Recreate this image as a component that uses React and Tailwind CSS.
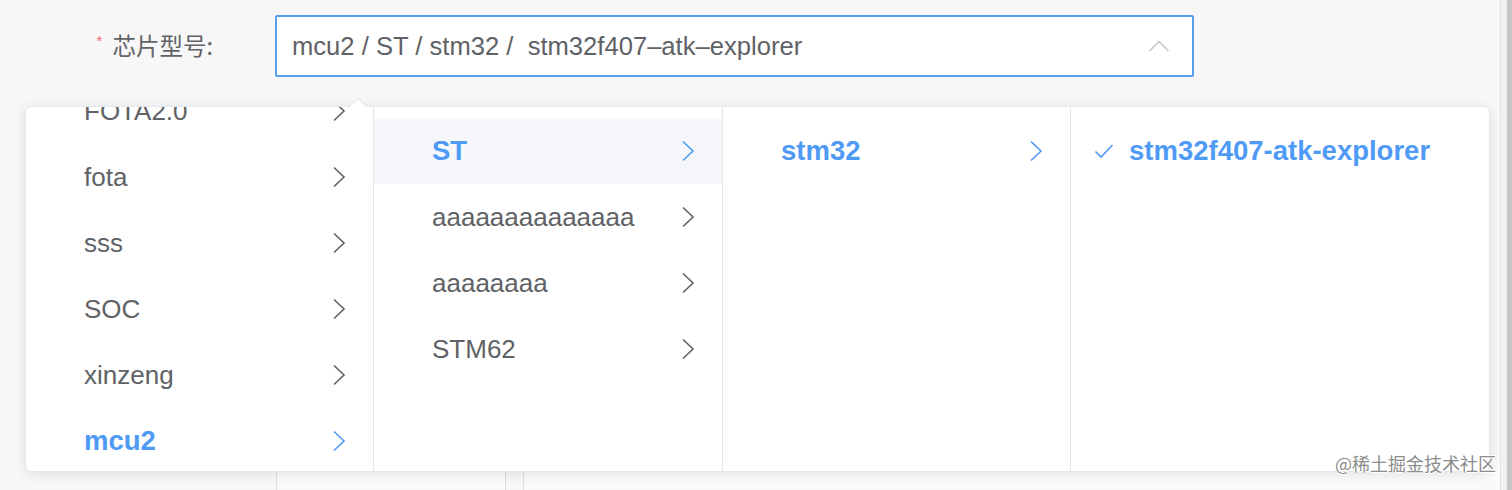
import React from "react";

const FONT = { fontFamily: '"Liberation Sans", Arial, "Noto Sans CJK SC", sans-serif' };

function ChevronRight({ active }) {
  return (
    <svg width="14" height="22" viewBox="0 0 14 22" fill="none" className="shrink-0">
      <path d="M2 1.5 L12 11 L2 20.5" stroke={active ? "#4f9af5" : "#606266"} strokeWidth="1.6" strokeLinejoin="miter" />
    </svg>
  );
}

function Item({ label, active, highlight, arrow = true, check }) {
  return (
    <div
      className={`h-[66px] flex items-center pr-[27px] ${check ? "pl-[23px]" : "pl-[58px]"} ${highlight ? "bg-[#f5f7fa]" : ""}`}
    >
      {check && (
        <svg width="20" height="16" viewBox="0 0 20 16" fill="none" className="mr-[15px] shrink-0">
          <path d="M1.5 8.5 L7 14 L18.5 2" stroke="#4f9af5" strokeWidth="1.6" />
        </svg>
      )}
      <span
        className={`flex-1 leading-none ${active ? "text-[27.5px] font-bold text-[#4f9af5]" : "text-[26px] text-[#606266]"}`}
      >
        {label}
      </span>
      {arrow && <ChevronRight active={active} />}
    </div>
  );
}

export default function App() {
  return (
    <div className="flex w-[1512px] h-[490px] overflow-hidden bg-[#f7f7f7]" style={FONT}>
      <div className="relative flex-1 flex flex-col">
        {/* form row */}
        <div className="flex items-center h-[62px] mt-[15px]">
          <div className="w-[275px] flex items-center justify-end pr-[62px] h-full">
            <span className="text-[#f56c6c] text-[15px] mr-[10px] mb-[10px]">*</span>
            <span className="text-[23.5px] text-[#606266]" style={{ fontFamily: '"Noto Sans CJK SC", "Liberation Sans", sans-serif' }}>
              芯片型号:
            </span>
          </div>
          <div className="w-[919px] h-[62px] border-2 border-[#5a9cef] bg-white rounded-[2px] flex items-center pl-[15px] pr-[22px]">
            <span className="flex-1 text-[25.6px] text-[#606266] whitespace-pre">mcu2 / ST / stm32 /  stm32f407–atk–explorer</span>
            <svg width="22" height="14" viewBox="0 0 22 14" fill="none">
              <path d="M1.5 12 L11 2.5 L20.5 12" stroke="#c0c4cc" strokeWidth="1.5" />
            </svg>
          </div>
        </div>

        {/* background form row (mostly hidden) */}
        <div className="flex mt-auto h-[30px]">
          <div className="w-[276px]" />
          <div className="w-[230px] border-l border-r border-[#dcdfe6] bg-[#fafafa]" />
          <div className="w-[17px]" />
          <div className="flex-1 border-l border-[#dcdfe6] bg-[#fafafa]" />
        </div>

        {/* popper arrow */}
        <div className="absolute left-[352px] top-[100px] w-[12px] h-[12px] bg-white rotate-45 border-l border-t border-[#e4e7ed] z-20" />

        {/* dropdown */}
        <div className="absolute left-[25px] top-[106px] w-[1465px] h-[366px] bg-white border border-[#e4e7ed] rounded-[6px] shadow-[0_2px_12px_rgba(0,0,0,0.1)] flex overflow-hidden z-10">
          <div className="w-[348px] border-r border-[#e4e7ed] overflow-hidden">
            <div className="mt-[-29px]">
              <Item label="FOTA2.0" />
              <Item label="fota" />
              <Item label="sss" />
              <Item label="SOC" />
              <Item label="xinzeng" />
              <Item label="mcu2" active />
            </div>
          </div>
          <div className="w-[349px] border-r border-[#e4e7ed] pt-[11px]">
            <Item label="ST" active highlight />
            <Item label="aaaaaaaaaaaaaa" />
            <Item label="aaaaaaaa" />
            <Item label="STM62" />
          </div>
          <div className="w-[348px] border-r border-[#e4e7ed] pt-[11px]">
            <Item label="stm32" active />
          </div>
          <div className="flex-1 pt-[11px]">
            <Item label="stm32f407-atk-explorer" active check arrow={false} />
          </div>
        </div>

        {/* watermark */}
        <div
          className="absolute left-[1335px] top-[450px] z-30 text-[18px] text-[#8c8c8c] whitespace-nowrap"
          style={{
            fontFamily: '"Noto Sans CJK SC", sans-serif',
            textShadow: "1px 0 #fff, -1px 0 #fff, 0 1px #fff, 0 -1px #fff",
          }}
        >
          @稀土掘金技术社区
        </div>
      </div>

      {/* right scrollbar strip */}
      <div className="w-[12px] flex border-l border-[#e2e2e2]">
        <div className="w-[6px] bg-[#f1f1f1]" />
        <div className="flex-1 bg-[#c6c6c6]" />
      </div>
    </div>
  );
}
